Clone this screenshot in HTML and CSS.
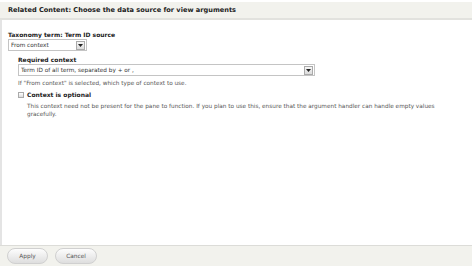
FILE: index.html
```html
<!DOCTYPE html>
<html lang="en">
<head>
    <meta charset="UTF-8">
    <meta name="viewport" content="width=device-width, initial-scale=1.0">
    <title>Related Content</title>
    <link rel="stylesheet" href="styles.css">
</head>
<body>

    <div class="modal">
        <div class="modal-header">
            <h2>Related Content: Choose the data source for view arguments</h2>
        </div>

        <form class="modal-content">
            <div class="form-item">
                <label class="form-label" for="source">Taxonomy term: Term ID source</label>
                <div class="select-box select-small">
                    <select id="source">
                        <option>From context</option>
                    </select>
                    <span class="select-arrow"><svg width="5" height="3" viewBox="0 0 5 3"><path d="M0 0h5L2.5 3z" fill="#222"/></svg></span>
                </div>
            </div>

            <div class="form-item sub-item">
                <label class="form-label" for="context">Required context</label>
                <div class="select-box select-wide">
                    <select id="context">
                        <option>Term ID of all term, separated by + or ,</option>
                    </select>
                    <span class="select-arrow"><svg width="5" height="3" viewBox="0 0 5 3"><path d="M0 0h5L2.5 3z" fill="#222"/></svg></span>
                </div>
                <div class="description">If "From context" is selected, which type of context to use.</div>
            </div>

            <div class="form-item sub-item checkbox-item">
                <label class="checkbox-label"><input type="checkbox"> Context is optional</label>
                <div class="description checkbox-desc">This context need not be present for the pane to function. If you plan to use this, ensure that the argument handler can handle empty values gracefully.</div>
            </div>
        </form>

        <div class="modal-footer">
            <button class="btn">Apply</button>
            <button class="btn">Cancel</button>
        </div>
    </div>

</body>
</html>
```

FILE: styles.css
```css
html, body {
    height: 100%;
}
body {
    margin: 0;
    background: #fff;
    font-family: "DejaVu Sans", Verdana, sans-serif;
    font-size: 5.75px;
    color: #222;
}
.modal {
    width: 472px;
    height: 100%;
    display: flex;
    flex-direction: column;
}
.modal-header {
    margin-top: 2px;
    height: 16px;
    background: #f2f2ed;
    border-bottom: 2px solid #e2e2de;
    display: flex;
    align-items: center;
    padding-left: 8px;
}
.modal-header h2 {
    margin: 0;
    font-size: 6.6px;
    font-weight: bold;
    color: #222;
}
.modal-content {
    flex: 1;
    border-left: 2px solid #e4e4e4;
    padding: 11px 6px 0;
}
.form-item {
    margin-bottom: 5px;
}
.sub-item {
    padding-left: 10px;
}
.form-label {
    display: block;
    font-size: 6px;
    font-weight: bold;
    color: #222;
    margin-bottom: 1px;
}
.select-box {
    display: flex;
    align-items: center;
    height: 12px;
    border: 1px solid #c4c4c4;
    box-sizing: border-box;
    background: #fff;
}
.select-small {
    width: 79px;
}
.select-wide {
    width: 297px;
}
.select-box select {
    flex: 1;
    appearance: none;
    -webkit-appearance: none;
    border: none;
    background: transparent;
    font-family: inherit;
    font-size: 5.75px;
    color: #333;
    padding: 0 2px;
    height: 10px;
    outline: none;
}
.select-arrow {
    width: 9px;
    height: 9px;
    margin-right: 1px;
    border: 1px solid #aaa;
    box-sizing: border-box;
    background: linear-gradient(#f6f6f6, #dcdcdc);
    display: flex;
    align-items: center;
    justify-content: center;
}
.description {
    color: #555;
    margin-top: 4px;
}
.checkbox-label {
    display: flex;
    align-items: center;
    font-size: 6px;
    font-weight: bold;
    color: #222;
}
.checkbox-label input {
    appearance: none;
    -webkit-appearance: none;
    width: 6px;
    height: 6px;
    margin: 0 3px 0 0;
    border: 1px solid #aaa;
    background: linear-gradient(#fff, #ddd);
}
.checkbox-desc {
    margin-top: 4px;
    padding-left: 9px;
    line-height: 8px;
    color: #555;
    width: 414px;
}
.modal-footer {
    height: 20px;
    border-top: 1px solid #dcdcd8;
    background: #f2f2ed;
    margin-bottom: 2px;
    display: flex;
    align-items: center;
    gap: 7px;
    padding-left: 7px;
}
.btn {
    font-family: inherit;
    font-size: 5.8px;
    color: #555;
    height: 16px;
    padding: 0 10px;
    border: 1px solid #d0d0d0;
    border-radius: 8px;
    background: linear-gradient(#fdfdfd, #dedede);
    cursor: pointer;
}
.btn:first-child {
    width: 41px;
}
.btn:last-child {
    width: 42px;
}
```
